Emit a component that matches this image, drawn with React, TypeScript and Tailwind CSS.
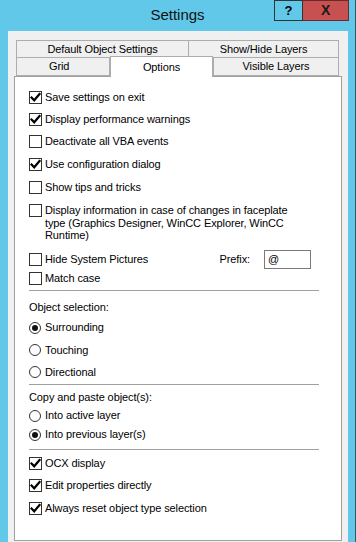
import React from 'react';

const font = { fontFamily: '"Liberation Sans", Arial, sans-serif' };

const Check = ({ checked }: { checked?: boolean }) => (
  <span className="w-[13px] h-[13px] shrink-0 border border-[#333333] bg-white flex items-center justify-center">
    {checked && (
      <svg width="11" height="11" viewBox="0 0 11 11">
        <path d="M1.5 5.5 L4.2 8.3 L9.5 2" fill="none" stroke="#000" strokeWidth="2.2" strokeLinecap="square" />
      </svg>
    )}
  </span>
);

const Radio = ({ checked }: { checked?: boolean }) => (
  <span className="w-[12px] h-[12px] shrink-0 rounded-full border border-[#333333] bg-white flex items-center justify-center">
    {checked && <span className="w-[6px] h-[6px] rounded-full bg-[#111111]" />}
  </span>
);

const CheckRow = ({ label, checked, h }: { label: string; checked?: boolean; h: string }) => (
  <div className={`flex items-center gap-[3px] ${h}`}>
    <Check checked={checked} />
    <span>{label}</span>
  </div>
);

const RadioRow = ({ label, checked, h }: { label: string; checked?: boolean; h: string }) => (
  <div className={`flex items-center gap-[4px] ${h}`}>
    <Radio checked={checked} />
    <span>{label}</span>
  </div>
);

const Sep = ({ mt }: { mt: string }) => <div className={`${mt} w-[290px] h-px bg-[#a0a0a0]`} />;

export default function App() {
  return (
    <div
      className="w-[356px] h-[542px] bg-[#62c8e9] flex flex-col border-r border-[#2d5866] text-[11px] tracking-[-0.1px] text-black overflow-hidden"
      style={font}
    >
      {/* title bar */}
      <div className="relative h-[31px] shrink-0 flex items-center justify-center">
        <span className="text-[15px] tracking-normal text-[#111111] -mt-[1px]">Settings</span>
        <div className="absolute top-0 right-[6px] flex h-[21px]">
          <div className="w-[29px] h-full border border-[#333333] flex items-center justify-center font-bold text-[13px]">?</div>
          <div className="w-[46px] h-full bg-[#c75050] border border-l-0 border-[#6b2a2a] flex items-center justify-center font-bold text-[14px] text-[#1a1a1a]">
            X
          </div>
        </div>
      </div>

      {/* client area */}
      <div className="flex-1 mx-[8px] mr-[7px] bg-[#f0f0f0] px-[6px] pt-[9px] pb-[1px] flex flex-col">
        {/* tab row 1 */}
        <div className="flex ml-[2px] h-[18px]">
          <div className="w-[173px] border border-[#adadad] flex items-center justify-center">Default Object Settings</div>
          <div className="w-[150px] border border-l-0 border-[#adadad] flex items-center justify-center">Show/Hide Layers</div>
        </div>
        {/* tab row 2 */}
        <div className="flex ml-[2px] h-[18px] items-end relative z-10">
          <div className="w-[94px] h-[18px] border border-t-0 border-[#adadad] flex items-center pl-[32px]">Grid</div>
          <div className="w-[103px] h-[21px] -mb-[1px] bg-white border border-b-0 border-[#adadad] flex items-start justify-center pt-[2px]">
            Options
          </div>
          <div className="w-[126px] h-[18px] border border-t-0 border-[#adadad] flex items-center justify-center">Visible Layers</div>
        </div>

        {/* panel */}
        <div className="flex-1 bg-white border border-[#a0a0a0] pl-[14px] pt-[9px] flex flex-col">
          <CheckRow label="Save settings on exit" checked h="h-[22px]" />
          <CheckRow label="Display performance warnings" checked h="h-[22px]" />
          <CheckRow label="Deactivate all VBA events" h="h-[23px]" />
          <CheckRow label="Use configuration dialog" checked h="h-[23px]" />
          <CheckRow label="Show tips and tricks" h="h-[22px]" />
          <div className="flex items-start gap-[3px] h-[45px] pt-[6px]">
            <Check />
            <span className="leading-[12.5px]">
              Display information in case of changes in faceplate
              <br />
              type (Graphics Designer, WinCC Explorer, WinCC
              <br />
              Runtime)
            </span>
          </div>
          <div className="mt-[6px] h-[20px] flex items-center w-[282px]">
            <Check />
            <span className="ml-[3px] flex-1">Hide System Pictures</span>
            <span className="mr-[14px]">Prefix:</span>
            <div className="w-[47px] h-[19px] border border-[#7a7a7a] bg-white flex items-center pl-[3px]">@</div>
          </div>
          <CheckRow label="Match case" h="h-[18px]" />
          <Sep mt="mt-[3px]" />
          <div className="mt-[7px] h-[18px] flex items-center">Object selection:</div>
          <RadioRow label="Surrounding" checked h="h-[23px]" />
          <RadioRow label="Touching" h="h-[22px]" />
          <RadioRow label="Directional" h="h-[22px]" />
          <Sep mt="mt-[1px]" />
          <div className="mt-[3px] h-[18px] flex items-center">Copy and paste object(s):</div>
          <RadioRow label="Into active layer" h="h-[19px]" />
          <RadioRow label="Into previous layer(s)" checked h="h-[19px]" />
          <Sep mt="mt-[5px]" />
          <div className="mt-[2px]" />
          <CheckRow label="OCX display" checked h="h-[22px]" />
          <CheckRow label="Edit properties directly" checked h="h-[23px]" />
          <CheckRow label="Always reset object type selection" checked h="h-[23px]" />
        </div>
      </div>
    </div>
  );
}
